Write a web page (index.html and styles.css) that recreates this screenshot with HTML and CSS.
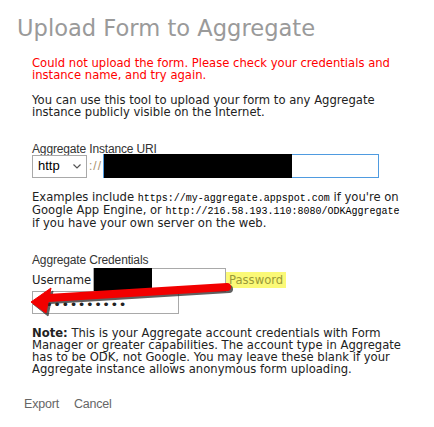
FILE: index.html
```html
<!DOCTYPE html>
<html lang="en">
<head>
    <meta charset="UTF-8">
    <title>Upload Form to Aggregate</title>
    <link rel="stylesheet" href="styles.css">
</head>
<body>
    <div class="dialog">
        <h1 class="title">Upload Form to Aggregate</h1>

        <div class="content">
            <p class="error">Could not upload the form. Please check your credentials and instance name, and try again.</p>

            <p class="intro">You can use this tool to upload your form to any Aggregate instance publicly visible on the Internet.</p>

            <div class="field-label">Aggregate Instance URI</div>
            <div class="url-row">
                <div class="select">
                    <span>http</span>
                    <svg class="chevron" width="8" height="5" viewBox="0 0 8 5"><polyline points="0.5,0.5 4,4 7.5,0.5" fill="none" stroke="#555" stroke-width="1.2"/></svg>
                </div>
                <span class="sep">://</span>
                <div class="text-input url-input focused">
                    <span class="redact redact-url"></span>
                </div>
            </div>

            <p class="examples">Examples include <code>https://my-aggregate.appspot.com</code> if you're on Google App Engine, or <code>http://216.58.193.110:8080/ODKAggregate</code> if you have your own server on the web.</p>

            <div class="field-label">Aggregate Credentials</div>
            <div class="cred-row">
                <span class="cred-label">Username</span>
                <div class="text-input user-input">
                    <span class="redact redact-user"></span>
                </div>
                <span class="password-label">Password</span>
            </div>
            <div class="text-input pass-input">
                <span class="dots">&bull;&bull;&bull;&bull;&bull;&bull;&bull;&bull;&bull;&bull;&bull;</span>
            </div>

            <p class="note"><b>Note:</b> This is your Aggregate account credentials with Form Manager or greater capabilities. The account type in Aggregate has to be ODK, not Google. You may leave these blank if your Aggregate instance allows anonymous form uploading.</p>
        </div>

        <div class="actions">
            <a class="action">Export</a>
            <a class="action">Cancel</a>
        </div>
    </div>

    <svg class="arrow" width="434" height="427" viewBox="0 0 434 427">
        <g fill="#2b2b2b" stroke="#2b2b2b" opacity="0.75">
            <line x1="50" y1="300" x2="229" y2="289" stroke-width="8" stroke-linecap="round"/>
            <polygon points="33,304 53,291 48,316" stroke-width="1"/>
        </g>
        <g fill="#f20000" stroke="#f20000">
            <line x1="48" y1="298" x2="227" y2="287" stroke-width="8" stroke-linecap="round"/>
            <polygon points="31,302 51,288 46,313" stroke-width="1"/>
        </g>
    </svg>
</body>
</html>
```

FILE: styles.css
```css
* {
    margin: 0;
    padding: 0;
    box-sizing: border-box;
}

body {
    position: relative;
    background: #ffffff;
    color: #222;
    font-family: 'DejaVu Sans', Verdana, sans-serif;
    font-size: 11.6px;
    line-height: 12px;
}

.dialog {
    width: 434px;
    height: 427px;
}

.title {
    margin: 15px 0 0 17px;
    font-size: 22.6px;
    line-height: 26px;
    font-weight: normal;
    color: #9a9a9a;
}

.content {
    padding-left: 32px;
}

.error {
    margin-top: 16px;
    color: #f00;
    width: 370px;
}

.intro {
    margin-top: 13px;
    width: 370px;
}

.field-label {
    font-family: 'Liberation Sans', Arial, sans-serif;
    font-size: 12px;
    line-height: 12px;
    letter-spacing: -0.15px;
    color: #333;
}

.intro + .field-label {
    margin-top: 25px;
}

.url-row {
    display: flex;
    align-items: center;
    margin-top: -1px;
}

.select {
    display: flex;
    align-items: center;
    justify-content: space-between;
    width: 55px;
    height: 23px;
    padding: 0 5px 0 5px;
    border: 1px solid #a9a9a9;
    font-family: 'Liberation Sans', Arial, sans-serif;
    font-size: 13px;
    color: #000;
}

.sep {
    width: 16px;
    padding-left: 2px;
    font-family: 'Liberation Sans', Arial, sans-serif;
    font-size: 12px;
    color: #a8906e;
    letter-spacing: 1px;
}

.text-input {
    position: relative;
    height: 24px;
    border: 1px solid #a9a9a9;
    background: #fff;
}

.url-input {
    width: 276px;
}

.focused {
    border-color: #4f9be0;
}

.redact {
    position: absolute;
    top: -1px;
    bottom: -1px;
    left: 0;
    background: #000;
}

.redact-url {
    width: 188px;
}

.examples {
    margin-top: 13px;
    width: 370px;
}

code {
    font-family: 'Liberation Mono', 'Courier New', monospace;
    font-size: 10px;
    line-height: 10px;
    color: #000;
}

.examples + .field-label {
    margin-top: 25px;
}

.cred-row {
    display: flex;
    align-items: center;
    margin-top: 2px;
}

.cred-label {
    width: 61px;
}

.user-input {
    width: 133px;
}

.redact-user {
    left: 0;
    top: -1px;
    bottom: -2px;
    width: 58px;
}

.password-label {
    padding: 2px 3px;
    background: #fbf977;
    color: #9a9a3a;
    line-height: 12px;
}

.pass-input {
    width: 147px;
    height: 23px;
    display: flex;
    align-items: center;
    padding: 4px 0 0 4px;
    margin-top: -1px;
}

.dots {
    font-size: 13px;
    letter-spacing: 0.5px;
    color: #222;
}

.note {
    margin-top: 13px;
    width: 380px;
}

.actions {
    display: flex;
    gap: 15px;
    margin: 23px 0 0 24px;
}

.action {
    font-family: 'Liberation Sans', Arial, sans-serif;
    font-size: 12.5px;
    line-height: 13px;
    color: #666;
    letter-spacing: -0.2px;
}

.arrow {
    position: absolute;
    top: 0;
    left: 0;
    pointer-events: none;
}
```
